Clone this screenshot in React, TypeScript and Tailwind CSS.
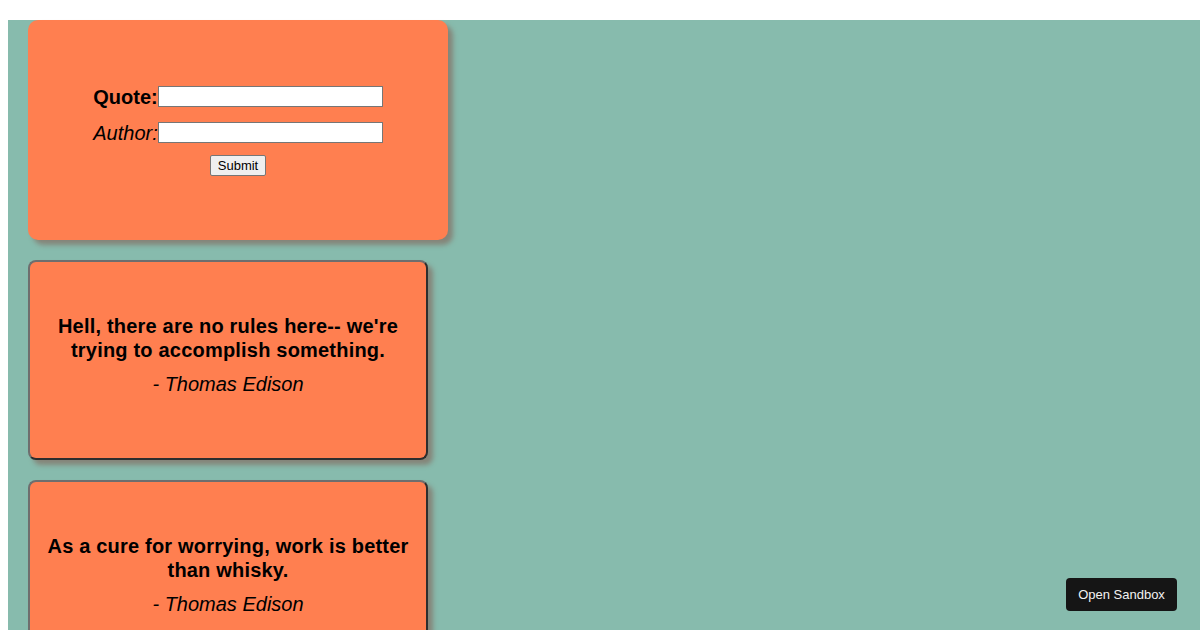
import React from "react";

const quotes = [
  { text: "Hell, there are no rules here-- we're trying to accomplish something.", author: "Thomas Edison" },
  { text: "As a cure for worrying, work is better than whisky.", author: "Thomas Edison" },
];

const QuoteCard: React.FC<{ text: string; author: string }> = ({ text, author }) => (
  <div className="flex h-[200px] w-[400px] flex-col items-center justify-center rounded-[8px] border-2 border-t-[#6e6e6e] border-l-[#6e6e6e] border-r-[#2e2e2e] border-b-[#2e2e2e] bg-[#ff7f50] px-[14px] pb-[10px] text-center shadow-[5px_5px_5px_#858579]">
    <p className="text-[20px] font-bold leading-[24px] tracking-[0.2px]">{text}</p>
    <p className="mt-[10px] text-[20px] italic leading-[24px]">- {author}</p>
  </div>
);

export default function App() {
  return (
    <div className="min-h-screen bg-white pl-[8px] pt-[20px] font-['Liberation_Sans',Arial,sans-serif] text-black">
      <div className="min-h-[700px] bg-[#87bbad] px-[20px] pb-[20px]">
        <div className="flex flex-col gap-[20px]">
          <form
            className="flex h-[220px] w-[420px] flex-col items-center justify-center rounded-[10px] bg-[#ff7f50] shadow-[5px_5px_5px_#858579]"
            onSubmit={(e) => e.preventDefault()}
          >
            <div className="flex items-center">
              <label className="text-[20px] font-bold leading-[24px]">Quote:</label>
              <input className="h-[21px] w-[225px] border border-[#767676] bg-white" />
            </div>
            <div className="mt-[12px] flex items-center">
              <label className="text-[20px] italic leading-[24px]">Author:</label>
              <input className="h-[21px] w-[225px] border border-[#767676] bg-white" />
            </div>
            <button className="mt-[10px] h-[21px] rounded-[2px] border border-[#767676] bg-[#efefef] px-[7px] text-[13px] leading-[19px]">
              Submit
            </button>
          </form>
          {quotes.map((q, i) => (
            <QuoteCard key={i} text={q.text} author={q.author} />
          ))}
        </div>
      </div>
      <div className="fixed bottom-[19px] right-[23px] flex h-[33px] w-[111px] items-center justify-center rounded-[4px] bg-[#151515] text-[13px] text-[#f2f2f2]">
        Open Sandbox
      </div>
    </div>
  );
}
